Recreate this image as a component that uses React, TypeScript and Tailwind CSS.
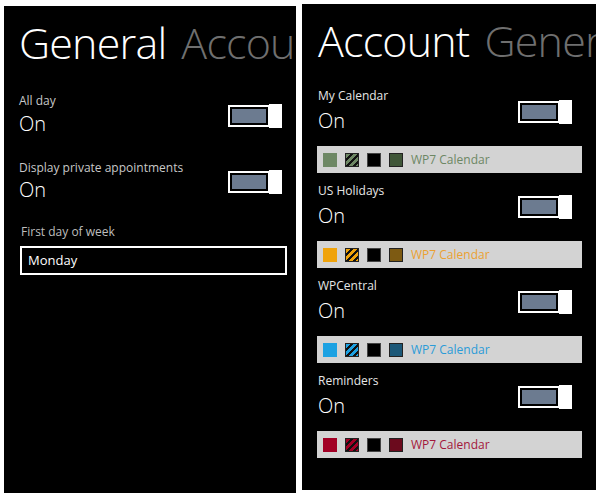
import React from 'react';

const font = { fontFamily: '"Open Sans", "Noto Sans", sans-serif' };

type Accent = {
  name: string;
  solid: string;
  hatch: string;
  dark: string;
  text: string;
};

// accent swatches per calendar, class names kept whole so Tailwind picks them up
const CALENDARS: Accent[] = [
  {
    name: 'My Calendar',
    solid: 'bg-[#6d8764]',
    hatch: 'bg-[repeating-linear-gradient(135deg,#6d8764_0_3px,#111_3px_5px)]',
    dark: 'bg-[#3f5638]',
    text: 'text-[#6d8764]',
  },
  {
    name: 'US Holidays',
    solid: 'bg-[#f0a30a]',
    hatch: 'bg-[repeating-linear-gradient(135deg,#f0a30a_0_3px,#111_3px_5px)]',
    dark: 'bg-[#7d5a12]',
    text: 'text-[#eba131]',
  },
  {
    name: 'WPCentral',
    solid: 'bg-[#1ba1e2]',
    hatch: 'bg-[repeating-linear-gradient(135deg,#1ba1e2_0_3px,#111_3px_5px)]',
    dark: 'bg-[#1b5878]',
    text: 'text-[#2a9bd8]',
  },
  {
    name: 'Reminders',
    solid: 'bg-[#a20025]',
    hatch: 'bg-[repeating-linear-gradient(135deg,#a20025_0_3px,#111_3px_5px)]',
    dark: 'bg-[#6b0a1d]',
    text: 'text-[#a3173b]',
  },
];

function Toggle() {
  return (
    <div className="flex items-center">
      <div className="w-[42px] h-[22px] border-2 border-white bg-black p-[2px]">
        <div className="w-full h-full bg-[#6c7b90]" />
      </div>
      <div className="w-[13px] h-[24px] bg-white -ml-[1px]" />
    </div>
  );
}

function PivotTitle({ current, next }: { current: string; next: string }) {
  return (
    <div className="whitespace-nowrap text-[43px] leading-none font-light tracking-[-0.8px]">
      <span className="text-white">{current}</span>
      <span className="ml-[15px] text-[#6f6f6f]">{next}</span>
    </div>
  );
}

function GeneralPanel() {
  return (
    <div className="mt-[6px] w-[292px] h-[487px] bg-black overflow-hidden pl-[15px] pr-[14px]" style={font}>
      <div className="mt-[15px]">
        <PivotTitle current="General" next="Account" />
      </div>

      <div className="mt-[28px] flex items-center justify-between">
        <div>
          <div className="text-[12px] leading-[18px] text-[#c8c8c8]">All day</div>
          <div className="mt-[1px] text-[20px] leading-[26px] font-light text-white">On</div>
        </div>
        <div className="mt-[2px]">
          <Toggle />
        </div>
      </div>

      <div className="mt-[22px] flex items-center justify-between">
        <div>
          <div className="text-[12px] leading-[18px] text-[#c8c8c8]">Display private appointments</div>
          <div className="text-[20px] leading-[26px] font-light text-white">On</div>
        </div>
        <div className="mt-[2px]">
          <Toggle />
        </div>
      </div>

      <div className="mt-[20px] pl-[2px] text-[12px] leading-[18px] text-[#bdbdbd]">First day of week</div>
      <div className="mt-[5px] ml-[1px] mr-[-5px] h-[29px] border-2 border-white bg-black flex items-center px-[6px]">
        <span className="text-[13px] text-white">Monday</span>
      </div>
    </div>
  );
}

function CalendarSection({ cal }: { cal: Accent }) {
  return (
    <div className="mb-[9px]">
      <div className="flex items-center justify-between pr-[10px]">
        <div>
          <div className="text-[12px] leading-[18px] text-[#e6e6e6]">{cal.name}</div>
          <div className="mt-[3px] text-[20px] leading-[26px] font-light text-white">On</div>
        </div>
        <div className="mt-[2px]">
          <Toggle />
        </div>
      </div>
      <div className="mt-[12px] -ml-[1px] h-[27px] bg-[#d3d3d3] flex items-center gap-[8px] pl-[6px]">
        <div className={`w-[14px] h-[14px] ${cal.solid}`} />
        <div className={`w-[14px] h-[14px] border border-[#222] ${cal.hatch}`} />
        <div className="w-[14px] h-[14px] bg-black border border-[#444]" />
        <div className={`w-[14px] h-[14px] border border-[#222] ${cal.dark}`} />
        <span className={`text-[12px] ${cal.text}`}>WP7 Calendar</span>
      </div>
    </div>
  );
}

function AccountPanel() {
  return (
    <div className="mt-[4px] ml-[6px] w-[294px] h-[486px] bg-black overflow-hidden pl-[16px] pr-[14px]" style={font}>
      <div className="mt-[15px]">
        <PivotTitle current="Account" next="General" />
      </div>
      <div className="mt-[25px]">
        {CALENDARS.map((cal) => (
          <CalendarSection key={cal.name} cal={cal} />
        ))}
      </div>
    </div>
  );
}

export default function App() {
  return (
    <div className="w-[600px] h-[497px] bg-white flex items-start pl-[4px]">
      <GeneralPanel />
      <AccountPanel />
    </div>
  );
}
